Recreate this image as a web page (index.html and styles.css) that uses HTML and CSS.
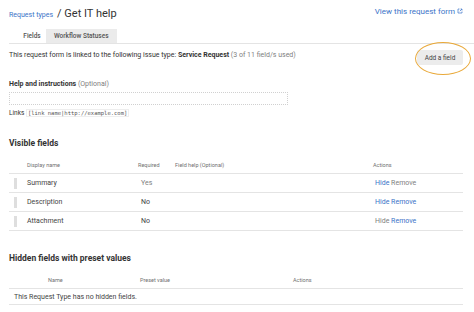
FILE: index.html
```html
<!DOCTYPE html>
<html lang="en">
<head>
    <meta charset="UTF-8">
    <title>Get IT help</title>
    <link rel="stylesheet" href="styles.css">
</head>
<body>
    <div class="pagina">
        <div class="cabecera">
            <div class="titulo">
                <a class="enlace-migas">Request types</a>
                <span class="nombre">/ Get IT help</span>
            </div>
            <a class="ver-form">View this request form
                <svg width="6" height="6" viewBox="0 0 6 6"><path d="M2.5 1H1v4h4V3.5M3.5 1H5v1.5M5 1L2.8 3.2" fill="none" stroke="#3b73c8" stroke-width="0.7"/></svg>
            </a>
        </div>

        <div class="pestanas">
            <span class="pestana activa">Fields</span>
            <span class="pestana">Workflow Statuses</span>
        </div>

        <div class="fila-info">
            <p class="info">This request form is linked to the following issue type: <strong>Service Request</strong> <span class="gris">(3 of 11 field/s used)</span></p>
            <div class="boton-zona">
                <button class="boton">Add a field</button>
                <span class="resalte"></span>
            </div>
        </div>

        <h4 class="etiqueta">Help and instructions <span class="gris">(Optional)</span></h4>
        <div class="caja-texto"></div>
        <p class="links">Links <code>[link name|http://example.com]</code></p>

        <h3 class="seccion">Visible fields</h3>
        <table class="tabla">
            <thead>
                <tr>
                    <th class="col-asa"></th>
                    <th class="col-nombre">Display name</th>
                    <th class="col-req">Required</th>
                    <th class="col-ayuda">Field help (Optional)</th>
                    <th class="col-acc">Actions</th>
                </tr>
            </thead>
            <tbody>
                <tr>
                    <td class="col-asa"><span class="asa"></span></td>
                    <td>Summary</td>
                    <td class="gris">Yes</td>
                    <td></td>
                    <td><a class="azul">Hide</a> <span class="gris">Remove</span></td>
                </tr>
                <tr>
                    <td class="col-asa"><span class="asa"></span></td>
                    <td>Description</td>
                    <td>No</td>
                    <td></td>
                    <td><a class="azul">Hide</a> <a class="azul">Remove</a></td>
                </tr>
                <tr>
                    <td class="col-asa"><span class="asa"></span></td>
                    <td>Attachment</td>
                    <td>No</td>
                    <td></td>
                    <td><span class="gris">Hide</span> <a class="azul">Remove</a></td>
                </tr>
            </tbody>
        </table>

        <h3 class="seccion ocultos">Hidden fields with preset values</h3>
        <table class="tabla tabla-ocultos">
            <thead>
                <tr>
                    <th class="col-n">Name</th>
                    <th class="col-p">Preset value</th>
                    <th class="col-a">Actions</th>
                </tr>
            </thead>
            <tbody>
                <tr>
                    <td colspan="3">This Request Type has no hidden fields.</td>
                </tr>
            </tbody>
        </table>
    </div>
</body>
</html>
```

FILE: styles.css
```css
:root {
    --azul: #3b73c8;
    --texto: #333333;
    --gris: #808080;
    --linea: #e4e4e4;
}

body {
    margin: 0;
    font-family: Roboto, "Liberation Sans", sans-serif;
    color: var(--texto);
    background: #ffffff;
}

.pagina {
    padding: 3px 11px 0 9px;
}

.cabecera {
    display: flex;
    justify-content: space-between;
    align-items: center;
    height: 16px;
}

.enlace-migas {
    color: var(--azul);
    font-size: 7px;
}

.nombre {
    font-size: 11px;
    color: #333;
}

.ver-form {
    color: var(--azul);
    font-size: 8px;
    margin-right: 0;
}

.pestanas {
    display: flex;
    margin-top: 10px;
    padding-left: 9px;
    border-bottom: 1px solid var(--linea);
    margin-right: -11px;
}

.pestana {
    font-size: 6.5px;
    font-weight: 500;
    color: #555;
    height: 14px;
    line-height: 14px;
    padding: 0 8px;
    background: #ebebeb;
}

.pestana.activa {
    background: #ffffff;
    padding: 0 5px 0 5px;
    width: 18px;
    text-align: center;
}

.fila-info {
    display: flex;
    justify-content: space-between;
    align-items: flex-start;
    margin-top: 6px;
}

.info {
    margin: 1px 0 0;
    font-size: 7px;
}

.info strong {
    font-weight: 700;
}

.gris {
    color: var(--gris);
    font-weight: 400;
}

.boton-zona {
    position: relative;
}

.boton {
    font-family: inherit;
    font-size: 6.5px;
    color: #444;
    background: #ececec;
    border: none;
    border-radius: 2px;
    width: 46px;
    height: 15px;
    padding: 0;
    display: block;
}

.resalte {
    position: absolute;
    left: -2px;
    top: -8px;
    width: 54px;
    height: 31px;
    border: 1.3px solid #e9a93a;
    border-radius: 50%;
}

.etiqueta {
    font-size: 7px;
    font-weight: 700;
    margin: 15px 0 0;
}

.caja-texto {
    width: 277px;
    height: 11px;
    margin-top: 4px;
    border: 1px dotted #d0d0d0;
}

.links {
    font-size: 6.5px;
    margin: 4px 0 0;
}

.links code {
    font-family: "DejaVu Sans Mono", monospace;
    font-size: 5.5px;
    color: #555;
    border: 1px solid #eee;
    padding: 0 1px;
}

.seccion {
    font-size: 8.5px;
    font-weight: 700;
    margin: 21px 0 0;
}

.tabla {
    width: 454px;
    table-layout: fixed;
    border-collapse: collapse;
    margin-top: 9px;
    font-size: 7px;
}

.tabla th {
    font-size: 5.5px;
    font-weight: 400;
    color: #707070;
    text-align: left;
    height: 16px;
    padding: 0;
    border-bottom: 1px solid var(--linea);
}

.tabla td {
    height: 18px;
    padding: 0;
    color: #444;
    font-weight: 400;
    border-bottom: 1px solid var(--linea);
}

.col-asa {
    width: 18px;
}

.asa {
    display: block;
    width: 3px;
    height: 11px;
    margin-left: 5px;
    background: #dedede;
}

.col-nombre {
    width: 111px;
}

.col-req {
    width: 37px;
}

.col-ayuda {
    width: 198px;
}

.col-acc {
    width: 90px;
}

.tabla td:nth-child(3) {
    padding-left: 3px;
}

.tabla td:nth-child(5) {
    padding-left: 2px;
}

.tabla td.gris,
.tabla .gris {
    color: var(--gris);
}

.tabla .azul {
    color: var(--azul);
}

.ocultos {
    margin-top: 22px;
}

.tabla-ocultos {
    margin-top: 9px;
}

.tabla-ocultos th {
    height: 16px;
}

.col-n {
    width: 92px;
    padding-left: 39px !important;
}

.col-p {
    width: 153px;
}

.tabla-ocultos td {
    padding-left: 5px;
    height: 15px;
}
```
